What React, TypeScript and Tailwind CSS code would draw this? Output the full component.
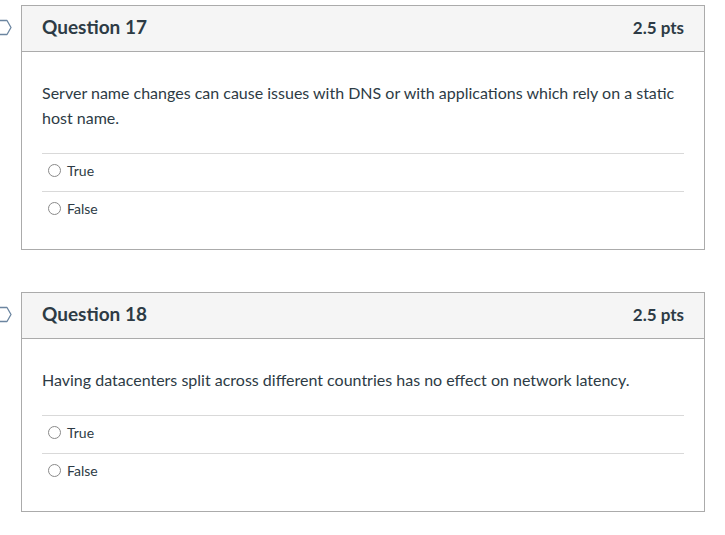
import React from "react";

function Flag() {
  return (
    <svg
      className="absolute left-[-32px] top-[13px]"
      width="22"
      height="17"
      viewBox="0 0 22 17"
      fill="none"
    >
      <path
        d="M0 1.5 H17 L21 8.5 L17 15.5 H0"
        stroke="#6b85a0"
        strokeWidth="1.3"
        strokeLinejoin="round"
        fill="#ffffff"
      />
    </svg>
  );
}

function Answer({ label }: { label: string }) {
  return (
    <div className="flex h-[38px] items-center border-t border-[#d9d9d9] pl-[6px] pb-[5px]">
      <span className="h-[13px] w-[13px] rounded-full border border-[#8a8a8a] bg-white" />
      <span className="ml-[6px] text-[14px] text-[#2d3b45]">{label}</span>
    </div>
  );
}

function Question({
  num,
  text,
  className,
}: {
  num: number;
  text: string;
  className: string;
}) {
  return (
    <div className={`relative ml-[21px] w-[684px] border border-[#ababab] ${className}`}>
      <Flag />
      <div className="flex h-[46px] items-center justify-between border-b border-[#ababab] bg-[#f5f5f5] px-[20px] pb-[2px]">
        <span className="text-[19px] font-bold text-[#2d3b45]">Question {num}</span>
        <span className="text-[17px] font-bold text-[#2d3b45]">2.5 pts</span>
      </div>
      <div className="px-[20px] pt-[28px] pb-[20px]">
        <p className="text-[16px] leading-[25px] text-[#2d3b45]">{text}</p>
        <div className="mt-[23px]">
          <Answer label="True" />
          <Answer label="False" />
        </div>
      </div>
    </div>
  );
}

export default function App() {
  return (
    <div
      className="min-h-[535px] w-[725px] overflow-hidden bg-white pt-[5px]"
      style={{ fontFamily: "Lato, 'Liberation Sans', sans-serif" }}
    >
      <Question
        num={17}
        className=""
        text="Server name changes can cause issues with DNS or with applications which rely on a static host name."
      />
      <Question
        num={18}
        className="mt-[42px]"
        text="Having datacenters split across different countries has no effect on network latency."
      />
    </div>
  );
}
